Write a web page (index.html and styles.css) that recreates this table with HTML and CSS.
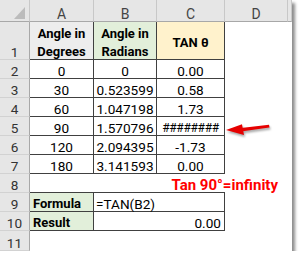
FILE: index.html
```html
<!DOCTYPE html>
<html>
<head>
<meta charset="utf-8">
<link rel="stylesheet" href="styles.css">
</head>
<body>
<div class="sheet">
  <div class="grid">
    <div class="corner"><span class="tri"></span></div>
    <div class="ch">A</div><div class="ch">B</div><div class="ch">C</div><div class="ch">D</div><div class="ch"></div>

    <div class="rh">1</div>
    <div class="c t hd ga">Angle in<br>Degrees</div>
    <div class="c t hd gb">Angle in<br>Radians</div>
    <div class="c t hd gc tan">TAN θ</div>
    <div class="c"></div><div class="c"></div>

    <div class="rh">2</div><div class="c t">0</div><div class="c t">0</div><div class="c t">0.00</div><div class="c"></div><div class="c"></div>
    <div class="rh">3</div><div class="c t">30</div><div class="c t">0.523599</div><div class="c t">0.58</div><div class="c"></div><div class="c"></div>
    <div class="rh">4</div><div class="c t">60</div><div class="c t">1.047198</div><div class="c t">1.73</div><div class="c"></div><div class="c"></div>
    <div class="rh">5</div><div class="c t">90</div><div class="c t">1.570796</div><div class="c t hash">########</div><div class="c"></div><div class="c"></div>
    <div class="rh">6</div><div class="c t">120</div><div class="c t">2.094395</div><div class="c t">-1.73</div><div class="c"></div><div class="c"></div>
    <div class="rh">7</div><div class="c t">180</div><div class="c t">3.141593</div><div class="c t">0.00</div><div class="c"></div><div class="c"></div>

    <div class="rh">8</div><div class="c bb"></div><div class="c bb"></div><div class="c bb"></div><div class="c note">Tan 90°=infinity</div><div class="c"></div>

    <div class="rh">9</div><div class="c t lbl gb">Formula</div><div class="c t span2 left">=TAN(B2)</div><div class="c"></div><div class="c"></div>
    <div class="rh">10</div><div class="c t lbl gb">Result</div><div class="c t span2 right">0.00</div><div class="c"></div><div class="c"></div>
    <div class="rh">11</div><div class="c"></div><div class="c"></div><div class="c"></div><div class="c"></div><div class="c"></div>
  </div>
  <svg class="arrow" width="300" height="260" viewBox="0 0 300 260">
    <g class="arrow-shape">
      <polygon points="226,130 242,124.3 244,135"/>
      <polygon points="241,128 269,124.8 269.5,127.6 241,131.4"/>
    </g>
  </svg>
</div>
</body>
</html>
```

FILE: styles.css
```css
body {
  margin: 0;
  background: #ffffff;
  font-family: Roboto, "Liberation Sans", Arial, sans-serif;
  color: #000;
}

.sheet {
  position: relative;
  width: 292px;
  height: 251px;
  background: #ffffff;
  box-shadow: 3px 3px 3px rgba(0, 0, 0, 0.45);
}

.grid {
  display: grid;
  grid-template-columns: 30px 64px 63px 68px 63px 4px;
  grid-template-rows: 22px 38px repeat(9, 19px) 20px;
}

.grid > div {
  box-sizing: border-box;
}

.corner {
  position: relative;
  background: #e6e6e6;
  border-right: 1px solid #c8c8c8;
  border-bottom: 1px solid #a8a8a8;
}

.tri {
  position: absolute;
  right: 4px;
  bottom: 2px;
  width: 0;
  height: 0;
  border-left: 11px solid transparent;
  border-bottom: 12px solid #bcbcbc;
}

.ch {
  display: flex;
  align-items: flex-end;
  justify-content: center;
  background: #e6e6e6;
  border-right: 1px solid #c8c8c8;
  border-bottom: 1px solid #a8a8a8;
  color: #444;
  font-size: 14px;
  line-height: 14px;
}

.rh {
  display: flex;
  align-items: flex-end;
  justify-content: center;
  background: #e6e6e6;
  border-right: 1px solid #a8a8a8;
  border-bottom: 1px solid #d2d2d2;
  color: #333;
  font-size: 13.6px;
  line-height: 14px;
}

.c {
  display: flex;
  align-items: flex-end;
  justify-content: center;
  font-size: 13.6px;
  line-height: 14px;
  white-space: nowrap;
}

.t {
  border-right: 1px solid #404040;
  border-bottom: 1px solid #404040;
}

.bb {
  border-bottom: 1px solid #404040;
}

.hd {
  align-items: center;
  padding-top: 4px;
  font-size: 13px;
  font-weight: 700;
  line-height: 18px;
  text-align: center;
  white-space: normal;
}

.tan {
  padding-top: 5px;
}

.ga { background: #ededed; }
.gb { background: #e2efda; }
.gc { background: #fff2cc; }

.hash {
  font-size: 12px;
  letter-spacing: -0.3px;
}

.note {
  justify-content: flex-end;
  padding-right: 10px;
  padding-bottom: 1px;
  color: #ff0000;
  font-size: 15px;
  font-weight: 700;
}

.lbl {
  justify-content: flex-start;
  padding-left: 3px;
  font-size: 13px;
  font-weight: 700;
}

.span2 {
  grid-column: span 2;
}

.left {
  justify-content: flex-start;
  padding-left: 2px;
}

.right {
  justify-content: flex-end;
  padding-right: 3px;
}

.arrow {
  position: absolute;
  left: 0;
  top: 0;
  pointer-events: none;
}

.arrow-shape {
  fill: #e60000;
  filter: drop-shadow(1px 2px 1px rgba(0, 0, 0, 0.35));
}
```
